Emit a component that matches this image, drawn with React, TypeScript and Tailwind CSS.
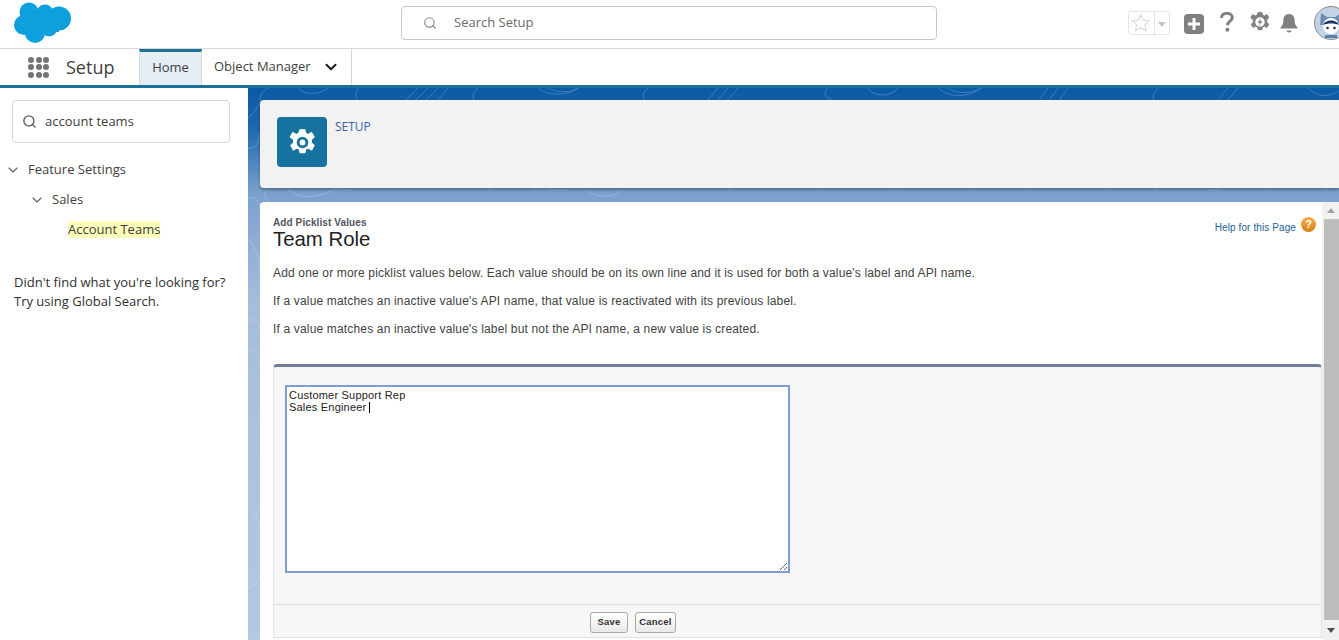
import React from "react";
import { Search, ChevronDown } from "lucide-react";

const sans = "font-['Open_Sans',sans-serif]";
const arial = "font-['Liberation_Sans',Arial,sans-serif]";

const Cloud = () => (
  <svg width="57" height="41" viewBox="0 0 57 41" fill="#0ea0dc">
    <circle cx="10" cy="23" r="10" />
    <circle cx="15" cy="10" r="9.500" />
    <circle cx="31" cy="11" r="8.500" />
    <circle cx="45" cy="16.500" r="12" />
    <circle cx="35" cy="26" r="8.500" />
    <circle cx="21" cy="31" r="10" />
    <rect x="11" y="10" width="34" height="20" />
  </svg>
);

const GEAR_PATH =
  "M10 1.500h4l.7 3 2.100.9 2.700-1.600 2.100 3.600-2.300 2.100v2.900l2.300 2.100-2.100 3.600-2.700-1.600-2.100.9-.7 3h-4l-.7-3-2.100-.9-2.700 1.600-2.100-3.600 2.300-2.100V9.500L1.900 7.400 4 3.800l2.700 1.600 2.100-.9z";

const Gear = ({ size, color, hole }: { size: number; color: string; hole: string }) => (
  <svg width={size} height={size} viewBox="0 0 24 24">
    <path fill={color} stroke={color} strokeWidth="1" strokeLinejoin="round" d={GEAR_PATH} />
    <circle cx="12" cy="12" r="4.800" fill={hole} />
    <circle cx="12" cy="12" r="2.400" fill={color} />
  </svg>
);

const BoltGear = () => (
  <svg width="22" height="22" viewBox="0 0 24 24">
    <path fill="#808080" stroke="#808080" strokeWidth="1" strokeLinejoin="round" d={GEAR_PATH} />
    <circle cx="12" cy="12" r="5.200" fill="#ffffff" />
    <path fill="#808080" d="M13 7.500l-3.600 5.300h2.300l-1 3.700 3.800-5.500h-2.400z" />
  </svg>
);

const Topo = () => (
  <svg className="absolute inset-0 h-full w-full" fill="none" stroke="#ffffff" strokeOpacity="0.2" strokeWidth="1">
    <path d="M20 0c-8 5-10 11-6 15M50 0c4 6 20 8 30 0M110 0c-4 6-2 12 2 15M170 0l-14 14M180 0l-14 14M190 0l-14 14M200 0l-12 14M230 0c-6 5-6 10-2 14M290 0c10 8 30 8 40 0M300 0c8 5 22 5 30 0M400 0c-6 4-6 10-2 14M470 0l-12 14M480 0l-12 14M490 0l-12 14M580 0c-8 8 2 12 10 14M620 0c2 6 20 12 30 0M690 0c10 10 30 10 44 0M700 0c8 6 24 6 32 0M800 0l-10 14M810 0l-10 14M820 0l-10 14M910 0c-6 6-6 10-2 14M980 0l-12 14M990 0l-12 14M1060 0c10 10 24 10 34 0" />
    <path d="M0 30c6-6 10-10 12-16M0 60c8 2 12-6 10-14M0 110c10-2 12 6 12 14M0 150c6 10 12 16 12 30M0 230c6 4 12 4 12 12M0 260c8 4 12 10 12 16M0 340c6-6 12-8 12-14M0 420c4 6 12 10 12 22M0 500c6-4 12-4 12-14" />
    <path d="M20 100c-6 6-2 14 6 16M40 102c14 10 30 8 50 -2M90 102l12 0M240 102c10-6 40-6 50 0M300 102l20 0M340 102c4 8 30 8 34 0M480 102c20-16 70-16 90 0M640 102c4-10 10-14 14 0M720 102c10-12 50-14 60 0M860 102c10-8 40-8 50 0M960 102l12 0M1020 102c10-12 44-14 60 0" />
  </svg>
);

export default function App() {
  return (
    <div className={`h-[640px] w-[1339px] overflow-hidden bg-white flex flex-col ${sans}`}>
      {/* Header */}
      <header className="h-[49px] shrink-0 border-b border-[#d8d8d8] flex items-center relative bg-white">
        <div className="ml-[14px] mt-[-3px]">
          <Cloud />
        </div>
        <div className="absolute left-[401px] top-[6px] h-[34px] w-[536px] rounded border border-[#c9c9c9] flex items-center">
          <Search size={14} strokeWidth={2} className="ml-[21px] text-[#8a8a8a]" />
          <span className="ml-[17px] text-[13px] text-[#6b6b6b]">Search Setup</span>
        </div>
        <div className="ml-auto flex items-center">
          <div className="h-[24px] w-[42px] rounded-[3px] border border-[#e4e4e4] flex items-center mr-[14px] mt-[-3px]">
            <svg width="26" height="22" viewBox="0 0 26 22" fill="none" stroke="#dcdcdc" strokeWidth="1.200">
              <path d="M12 2.500l2.600 5.600 6 .7-4.400 4.100 1.200 6-5.400-3-5.400 3 1.200-6-4.400-4.100 6-.7z" />
            </svg>
            <div className="h-full w-[1px] bg-[#e4e4e4]" />
            <svg width="14" height="22" viewBox="0 0 14 22" fill="#c4c4c4">
              <path d="M3 10h8l-4 5z" />
            </svg>
          </div>
          <div className="h-[20px] w-[20px] rounded-[4px] bg-[#808080] flex items-center justify-center mr-[15px]">
            <svg width="14" height="14" viewBox="0 0 14 14" fill="#ffffff">
              <rect x="5.500" y="1" width="3" height="12" />
              <rect x="1" y="5.500" width="12" height="3" />
            </svg>
          </div>
          <svg width="16" height="22" viewBox="0 0 16 22" fill="none" className="mr-[14px] mt-[-4px]">
            <path d="M2.500 7c0-3 2.400-4.800 5.400-4.800S13.300 4 13.300 6.600c0 3.400-4.800 3.800-4.800 7.600" stroke="#808080" strokeWidth="3" />
            <circle cx="8.400" cy="18.800" r="2" fill="#808080" />
          </svg>
          <div className="mr-[8px] h-[22px] flex items-center mt-[-4px]">
            <BoltGear />
          </div>
          <svg width="20" height="22" viewBox="0 0 20 22" fill="#808080" className="mr-[15px] mt-[-2px]">
            <path d="M10 2c3.600 0 5.600 2.800 5.600 6.200 0 4 1.200 5.600 2.900 7.300v1H1.500v-1c1.700-1.700 2.900-3.300 2.900-7.300C4.400 4.800 6.400 2 10 2z" />
            <path d="M7.500 18.500h5a2.500 2 0 0 1-5 0z" />
          </svg>
          <div className="h-[34px] w-[25px] overflow-hidden mt-[-3px]">
            <svg width="34" height="34" viewBox="0 0 34 34">
              <circle cx="17" cy="17" r="16.500" fill="#c3d3e6" stroke="#8b8b8b" />
              <path d="M7 7l6 4h8l6-4 1 12H6z" fill="#6d8cb4" />
              <circle cx="17" cy="20" r="8" fill="#ffffff" />
              <path d="M9 19c2-6 14-6 16 0-4-2-12-2-16 0z" fill="#1c3661" />
              <circle cx="13.500" cy="22" r="1.300" fill="#1c3661" />
              <circle cx="20.500" cy="22" r="1.300" fill="#1c3661" />
              <path d="M11 29h12v3H11z" fill="#5f7ea6" />
            </svg>
          </div>
        </div>
      </header>

      {/* Nav */}
      <nav className="h-[39px] shrink-0 flex border-b-[3px] border-[#1b7096] bg-white">
        <div className="w-[139px] flex items-center">
          <div className="ml-[28px] grid grid-cols-3 gap-[1.500px]">
            {[0, 1, 2, 3, 4, 5, 6, 7, 8].map((i) => (
              <span key={i} className="h-[6px] w-[6px] rounded-full bg-[#747474]" />
            ))}
          </div>
          <span className="ml-[17px] text-[18px] text-[#3e3e3c]">Setup</span>
        </div>
        <div className="w-[63px] border-t-[3px] border-x border-t-[#1b7096] border-x-[#d8d8d8] bg-[#e5eef4] flex items-center justify-center pb-[2px] text-[13px] text-[#3e3e3c]">
          Home
        </div>
        <div className="w-[150px] border-r border-[#d8d8d8] flex items-center pl-[12px] text-[13px] text-[#3e3e3c]">
          Object Manager
          <ChevronDown size={18} strokeWidth={2.800} className="ml-[11px] text-[#1f1f1f]" />
        </div>
      </nav>

      <div className="flex-1 flex min-h-0">
        {/* Sidebar */}
        <aside className="w-[248px] shrink-0 bg-white text-[#3e3e3c]">
          <div className="ml-[12px] mr-[18px] mt-[12px] h-[43px] rounded border border-[#d8d8d8] flex items-center">
            <Search size={15} strokeWidth={2.200} className="ml-[9px] text-[#5f5f5f]" />
            <span className="ml-[8px] text-[13px] text-[#3e3e3c]">account teams</span>
          </div>
          <div className="mt-[12px] flex flex-col text-[13px]">
            <div className="h-[30px] flex items-center pl-[5px]">
              <ChevronDown size={16} strokeWidth={1.600} className="text-[#5f5f5f]" />
              <span className="ml-[7px]">Feature Settings</span>
            </div>
            <div className="h-[30px] flex items-center pl-[29px]">
              <ChevronDown size={16} strokeWidth={1.600} className="text-[#5f5f5f]" />
              <span className="ml-[7px]">Sales</span>
            </div>
            <div className="h-[29px] flex items-center pl-[68px]">
              <span className="bg-[#fbfdb8] leading-[17px]">Account Teams</span>
            </div>
          </div>
          <p className="mt-[29px] ml-[14px] text-[13px] leading-[19px] text-[#2f2f2f]">
            Didn't find what you're looking for?
            <br />
            Try using Global Search.
          </p>
        </aside>

        {/* Main */}
        <main className="relative flex-1 min-w-0 bg-[linear-gradient(180deg,#0a5aa4_0px,#1d68ae_40px,#7ba0cd_105px,#a5bcdc_210px,#b4c8e2_552px)] pl-[12px] pt-[12px] flex flex-col">
          <Topo />
          <div className="relative h-[88px] shrink-0 rounded-l bg-[#f3f2f2] shadow-[0_2px_3px_rgba(0,0,0,0.3)] flex pl-[17px] pt-[17px]">
            <div className="h-[50px] w-[50px] rounded bg-[#16729f] flex items-center justify-center">
              <Gear size={29} color="#ffffff" hole="#16729f" />
            </div>
            <span className="ml-[8px] mt-[3px] text-[12px] leading-[14px] text-[#3a62a8]">SETUP</span>
          </div>

          <div className={`relative mt-[14px] flex-1 min-h-0 rounded-tl bg-white flex ${arial}`}>
            <div className="flex-1 min-w-0 flex flex-col pl-[13px]">
              <div className="flex justify-between pt-[15px] pr-[6px]">
                <div>
                  <div className="text-[10px] leading-[11px] tracking-[0.1px] font-bold text-[#55555f]">Add Picklist Values</div>
                  <h1 className="text-[20.400px] leading-[22px] text-[#222222]">Team Role</h1>
                </div>
                <div className="flex items-start">
                  <span className="mt-[5px] text-[10px] leading-[12px] tracking-[0.1px] text-[#1d6296]">Help for this Page</span>
                  <span className="ml-[5px] h-[15px] w-[15px] rounded-full bg-gradient-to-b from-[#f6b04a] to-[#d97d0e] flex items-center justify-center text-[11px] leading-none font-bold text-white">
                    ?
                  </span>
                </div>
              </div>
              <div className="mt-[17px] flex flex-col gap-[16px] text-[12px] leading-[12px] tracking-[0.165px] text-[#3f3f3f]">
                <p>Add one or more picklist values below. Each value should be on its own line and it is used for both a value's label and API name.</p>
                <p>If a value matches an inactive value's API name, that value is reactivated with its previous label.</p>
                <p>If a value matches an inactive value's label but not the API name, a new value is created.</p>
              </div>

              <div className="mt-[29px] h-[274px] shrink-0 rounded-t border-t-[3px] border-[#747e96] border-x border-x-[#e6e6e6] border-b border-b-[#e0e0e0] bg-[#f7f7f7] flex flex-col">
                <div className="relative flex-1 pl-[11px] pt-[18px]">
                  <textarea
                    readOnly
                    value={"Customer Support Rep\nSales Engineer"}
                    className="block h-[188px] w-[505px] border-2 border-[#7c9fd0] bg-white px-[2px] py-[2px] text-[11px] leading-[12px] tracking-[0.2px] text-[#222222] outline-none"
                  />
                  <span className="absolute left-[95px] top-[35px] h-[11px] w-[1px] bg-black" />
                </div>
                <div className="h-[33px] border-t border-[#dcdcdc] flex items-center justify-start pl-[316px] pt-[2px] gap-[7px]">
                  <button className="h-[21px] w-[38px] rounded-[3px] border border-[#a8a8a8] bg-gradient-to-b from-white to-[#e9e9e9] text-[9.500px] tracking-[0.2px] font-bold text-[#333333]">
                    Save
                  </button>
                  <button className="h-[21px] w-[41px] rounded-[3px] border border-[#a8a8a8] bg-gradient-to-b from-white to-[#e9e9e9] text-[9.500px] tracking-[0.2px] font-bold text-[#333333]">
                    Cancel
                  </button>
                </div>
              </div>
            </div>

            {/* Scrollbar */}
            <div className="w-[17px] shrink-0 bg-[#f1f1f1] flex flex-col">
              <div className="h-[17px] flex items-center justify-center">
                <div className="h-0 w-0 border-x-[4px] border-x-transparent border-b-[5px] border-b-[#a3a3a3]" />
              </div>
              <div className="flex-1 ml-[2px] bg-[#bdbdbd]" />
              <div className="h-[20px] flex items-center justify-center">
                <div className="h-0 w-0 border-x-[4px] border-x-transparent border-t-[5px] border-t-[#505050]" />
              </div>
            </div>
          </div>
        </main>
      </div>
    </div>
  );
}
